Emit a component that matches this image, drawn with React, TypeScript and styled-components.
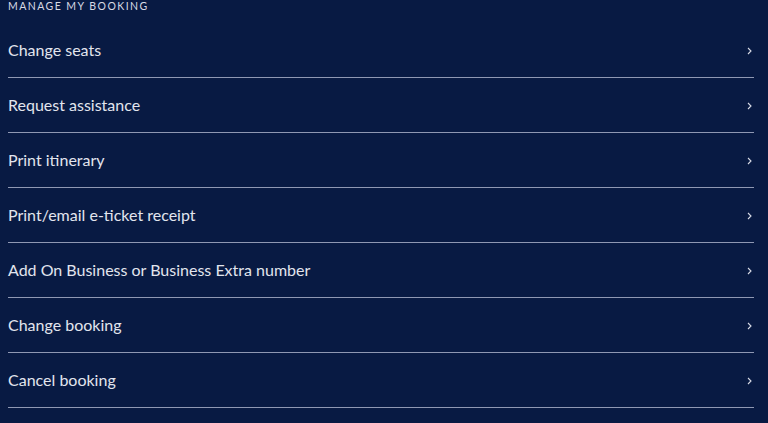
import React from "react";
import styled, { createGlobalStyle } from "styled-components";

const Global = createGlobalStyle`
  html, body { margin: 0; padding: 0; background: #081a43; }
  body { font-family: Lato, "Open Sans", sans-serif; color: #e8eaf0; }
`;

const Page = styled.div`
  padding: 0 14px 0 8px;
  background: #081a43;
  min-height: 423px;
  box-sizing: border-box;
`;

const Heading = styled.h2`
  margin: 0;
  height: 23px;
  font-size: 10.5px;
  font-weight: 400;
  letter-spacing: 1.45px;
  line-height: 13px;
  color: #d8dbe5;
  text-transform: uppercase;
`;

const List = styled.ul`
  list-style: none;
  margin: 0;
  padding: 0;
`;

const Row = styled.li`
  display: flex;
  align-items: center;
  justify-content: space-between;
  height: 54px;
  border-bottom: 1px solid #8f98b3;
  font-size: 16px;
  font-weight: 400;
  color: #e2e5ee;
`;

const Label = styled.span`
  padding-bottom: 2px;
`;

const Chevron = styled.span`
  display: flex;
  margin-right: 2px;
  margin-top: 2px;
`;

const items = [
  "Change seats",
  "Request assistance",
  "Print itinerary",
  "Print/email e-ticket receipt",
  "Add On Business or Business Extra number",
  "Change booking",
  "Cancel booking",
];

export default function App() {
  return (
    <>
      <Global />
      <Page>
        <Heading>Manage my booking</Heading>
        <List>
          {items.map((t) => (
            <Row key={t}>
              <Label>{t}</Label>
              <Chevron>
                <svg width="5" height="8" viewBox="0 0 5 8">
                  <path d="M1 1 L4 4 L1 7" fill="none" stroke="#d8dbe5" strokeWidth="1.1" />
                </svg>
              </Chevron>
            </Row>
          ))}
        </List>
      </Page>
    </>
  );
}
